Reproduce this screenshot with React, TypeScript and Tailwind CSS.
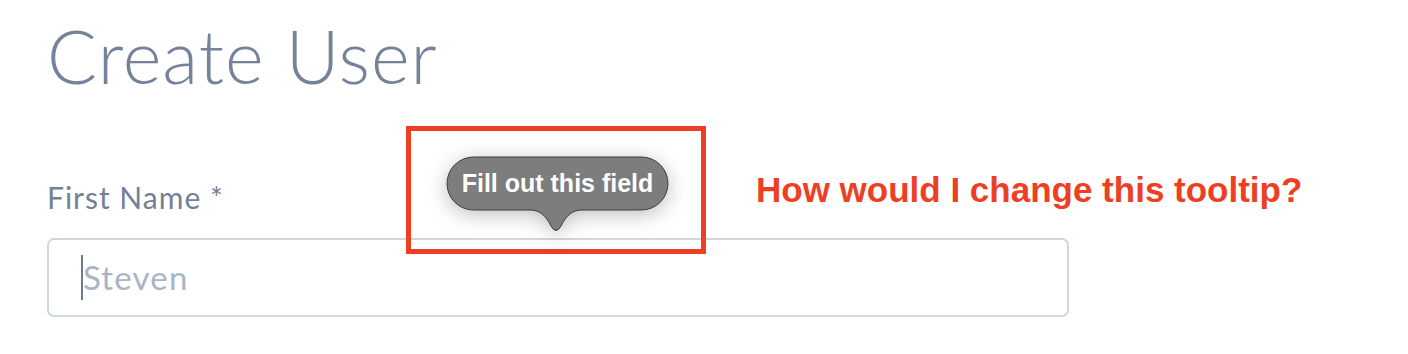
export default function App() {
  return (
    <div className="relative h-[354px] w-[1408px] overflow-hidden bg-white font-['Lato',sans-serif]">
      <div className="flex flex-col pl-[47px] pt-[11px]">
        <h1 className="text-[74px] font-light leading-[90px] tracking-[1px] text-[#74829a]">Create User</h1>
        <label className="mt-[80px] text-[30px] leading-[32px] tracking-[1px] text-[#738096]">First Name *</label>
        <div className="mt-[25px] flex h-[79px] w-[1022px] items-center rounded-[7px] border-2 border-[#cfd7e1] pl-[32px]">
          <span className="h-[45px] w-[2px] bg-[#6b7a90]" />
          <span className="text-[33px] tracking-[1.2px] text-[#a9b5c6]">Steven</span>
        </div>
      </div>

      <div className="absolute left-[406px] top-[126px] h-[128px] w-[300px] border-[5px] border-[#ee3f24]" />

      <div className="absolute left-[440px] top-[150px] h-[90px] w-[240px]">
        <svg width="240" height="90" viewBox="0 0 240 90" className="absolute inset-0 drop-shadow-[0_4px_10px_rgba(0,0,0,0.25)]">
          <path
            d="M 33.5 7 H 201.5 A 26.5 26.5 0 0 1 201.5 60 H 142 C 132 60 126 66 121 76 Q 116 85 111 76 C 106 66 100 60 90 60 H 33.5 A 26.5 26.5 0 0 1 33.5 7 Z"
            fill="#7d7d7e"
            stroke="#3c3c3c"
            strokeWidth="1"
          />
        </svg>
        <div className="absolute left-[7px] top-[7px] flex h-[53px] w-[221px] items-center justify-center font-['Liberation_Sans',sans-serif] text-[25px] font-bold text-white">
          Fill out this field
        </div>
      </div>

      <p className="absolute left-[756px] top-[170px] font-['Liberation_Sans',sans-serif] text-[35px] font-bold leading-[40px] text-[#ee3f24]">
        How would I change this tooltip?
      </p>
    </div>
  );
}
